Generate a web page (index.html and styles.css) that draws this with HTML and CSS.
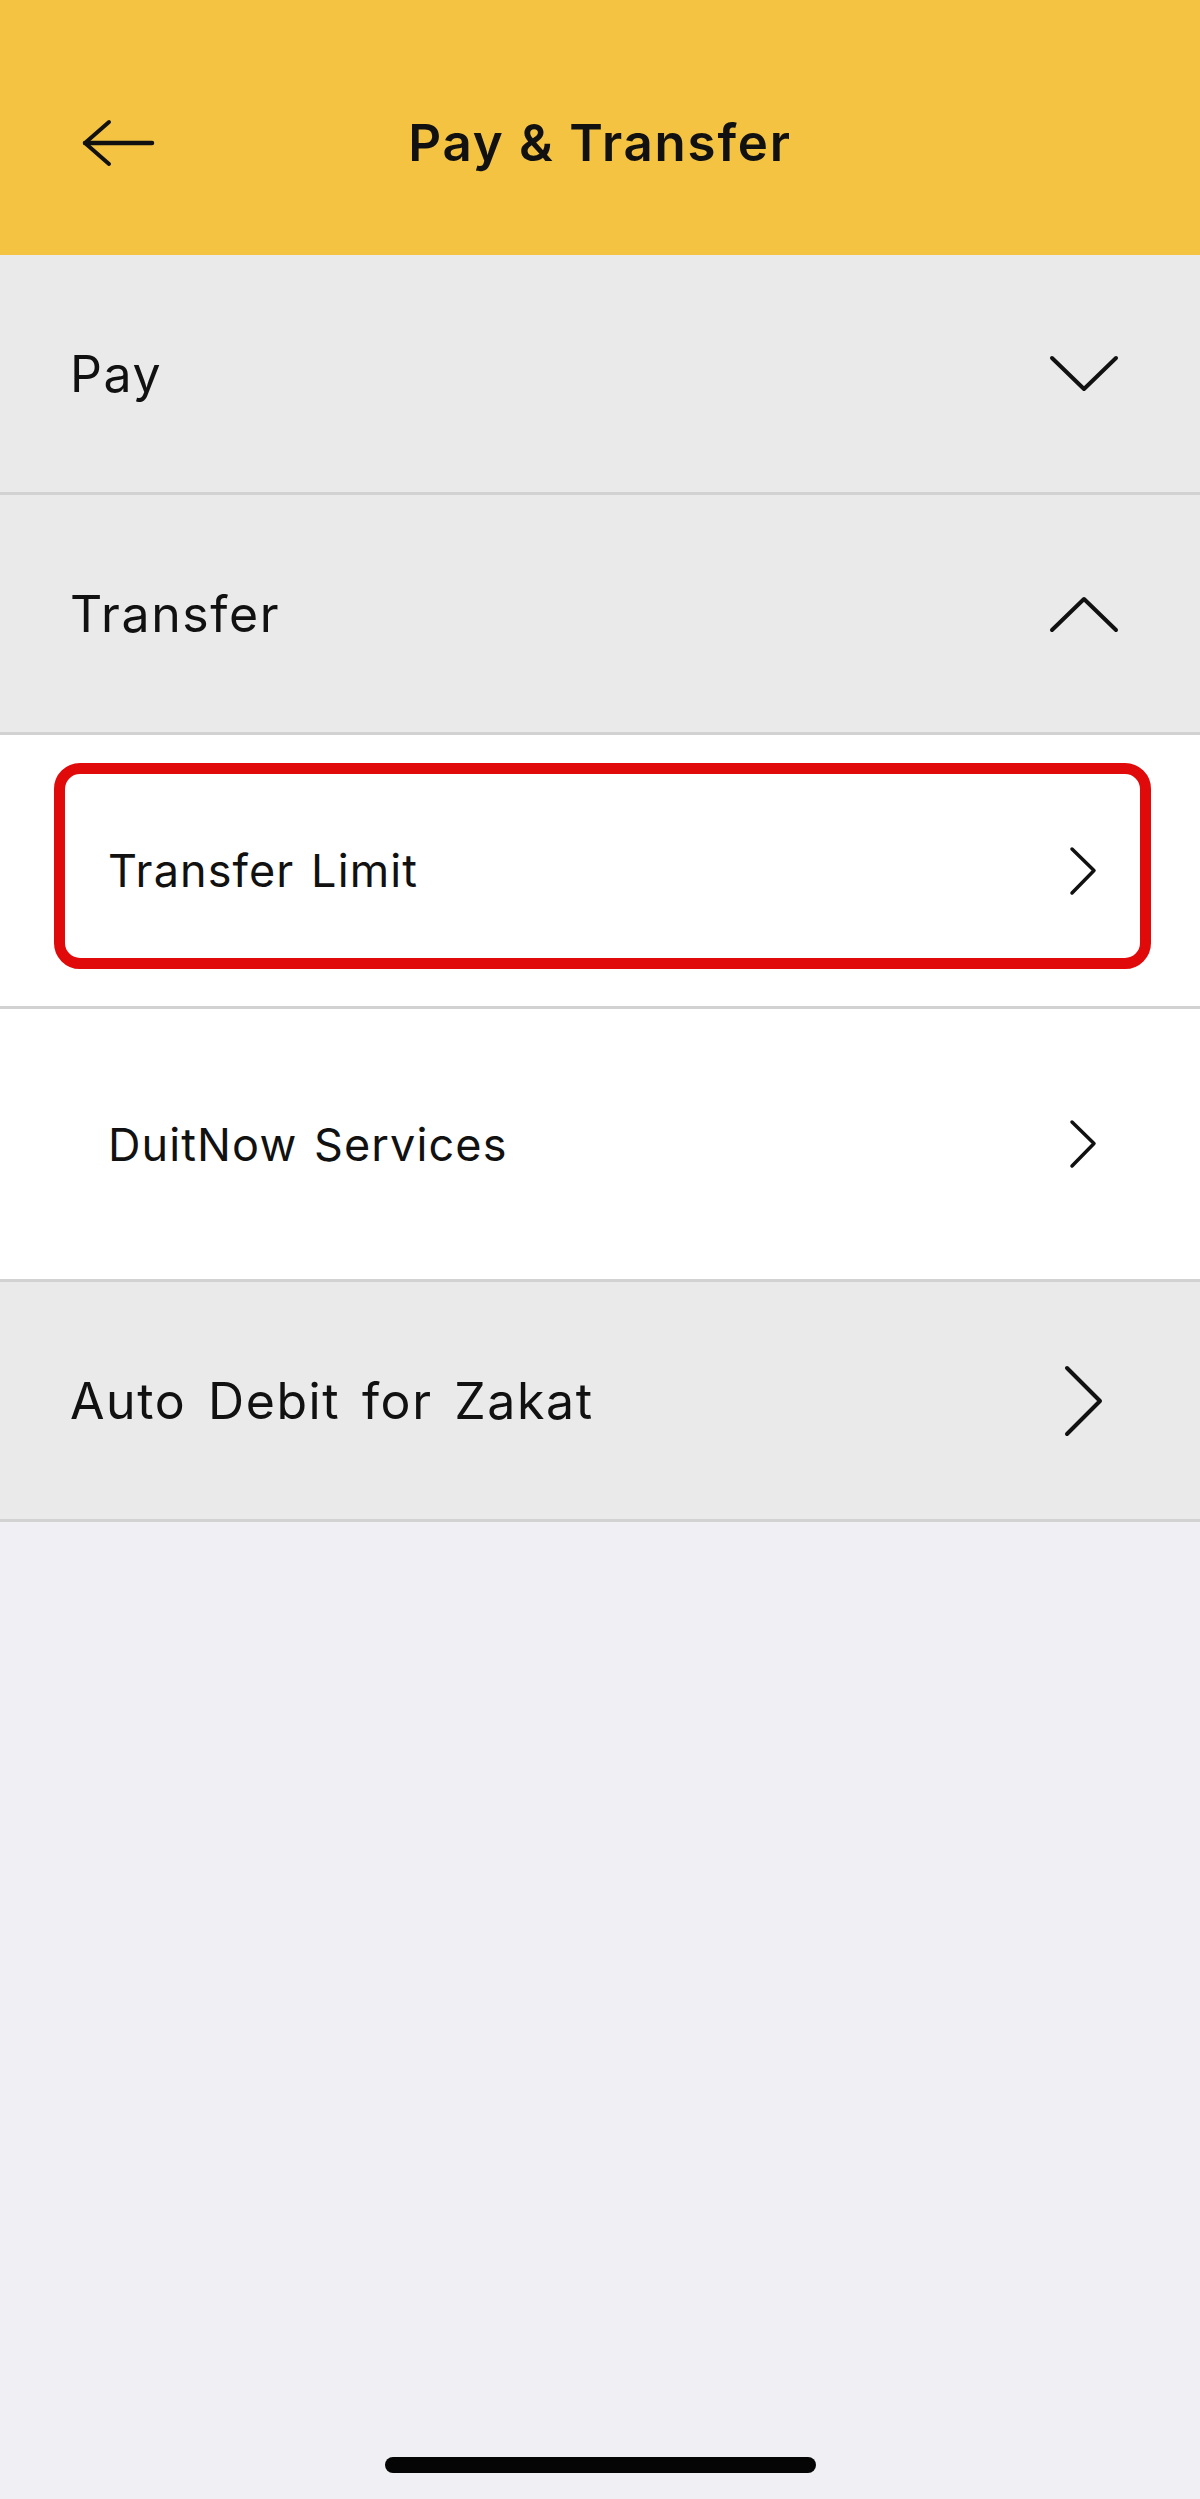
FILE: index.html
```html
<!DOCTYPE html>
<html lang="en">
<head>
    <meta charset="UTF-8">
    <meta name="viewport" content="width=device-width, initial-scale=1.0">
    <title>Pay &amp; Transfer</title>
    <link rel="stylesheet" href="styles.css">
</head>
<body>
    <div class="screen">
        <header class="topbar">
            <div class="back">
                <svg width="74" height="50" viewBox="0 0 74 50">
                    <polyline points="28,4 4,25 28,46" fill="none" stroke="#111" stroke-width="4" stroke-linecap="round" stroke-linejoin="round"/>
                    <line x1="4" y1="25" x2="71" y2="25" stroke="#111" stroke-width="4.5" stroke-linecap="round"/>
                </svg>
            </div>
            <h1>Pay &amp; Transfer</h1>
            <div></div>
        </header>

        <div class="section">
            <span>Pay</span>
            <svg width="72" height="40" viewBox="0 0 72 40">
                <polyline points="4,4 36,35 68,4" fill="none" stroke="#111" stroke-width="4" stroke-linecap="round" stroke-linejoin="round"/>
            </svg>
        </div>

        <div class="section">
            <span>Transfer</span>
            <svg width="72" height="40" viewBox="0 0 72 40">
                <polyline points="4,36 36,5 68,36" fill="none" stroke="#111" stroke-width="4" stroke-linecap="round" stroke-linejoin="round"/>
            </svg>
        </div>

        <div class="sub-item selected">
            <span>Transfer Limit</span>
            <svg width="30" height="52" viewBox="0 0 30 52">
                <polyline points="4,4 26,25.5 4,48" fill="none" stroke="#111" stroke-width="3.5" stroke-linecap="round" stroke-linejoin="round"/>
            </svg>
            <div class="highlight"></div>
        </div>

        <div class="sub-item">
            <span>DuitNow Services</span>
            <svg width="30" height="52" viewBox="0 0 30 52">
                <polyline points="4,4 26,25.5 4,48" fill="none" stroke="#111" stroke-width="3.5" stroke-linecap="round" stroke-linejoin="round"/>
            </svg>
        </div>

        <div class="section link">
            <span>Auto Debit for Zakat</span>
            <svg width="41" height="74" viewBox="0 0 41 74">
                <polyline points="4,4 37,37 4,70" fill="none" stroke="#111" stroke-width="4" stroke-linecap="round" stroke-linejoin="round"/>
            </svg>
        </div>

        <div class="home-bar"></div>
    </div>
</body>
</html>
```

FILE: styles.css
```css
body {
    margin: 0;
    font-family: Inter, "Noto Sans", sans-serif;
    color: #111;
    background-color: #efeff4;
}
.screen {
    width: 1200px;
    height: 2499px;
    display: flex;
    flex-direction: column;
}

/* yellow top bar */
.topbar {
    height: 255px;
    box-sizing: border-box;
    padding-top: 30px;
    background-color: #f5c342;
    display: grid;
    grid-template-columns: 1fr auto 1fr;
    align-items: center;
}
.back { padding-left: 81px; display: flex; }
.topbar h1 {
    margin: 0;
    font-size: 51px;
    font-weight: 600;
    line-height: 1;
    letter-spacing: 1.8px;
}

/* accordion headers */
.section {
    height: 240px;
    box-sizing: border-box;
    padding: 0 80px 0 70px;
    background-color: #eaeaea;
    border-bottom: 3px solid #d2d2d2;
    display: flex;
    align-items: center;
    justify-content: space-between;
    font-size: 50px;
    line-height: 1;
    letter-spacing: 1.6px;
    word-spacing: 6px;
}
.section svg { display: block; }
.section.link { padding-right: 96px; }

/* items inside the open section */
.sub-item {
    position: relative;
    height: 274px;
    box-sizing: border-box;
    padding: 0 102px 0 108px;
    background-color: #fff;
    border-bottom: 3px solid #d2d2d2;
    display: flex;
    align-items: center;
    justify-content: space-between;
    font-size: 45px;
    line-height: 1;
    letter-spacing: 1.1px;
    word-spacing: 3px;
}
.sub-item + .sub-item { height: 273px; }
.sub-item svg { display: block; }

.highlight {
    position: absolute;
    left: 54px;
    top: 28px;
    width: 1097px;
    height: 206px;
    box-sizing: border-box;
    border: 11px solid #e00a0a;
    border-radius: 26px;
}

.home-bar {
    margin: auto auto 26px;
    width: 431px;
    height: 16px;
    border-radius: 8px;
    background-color: #050505;
}
```
